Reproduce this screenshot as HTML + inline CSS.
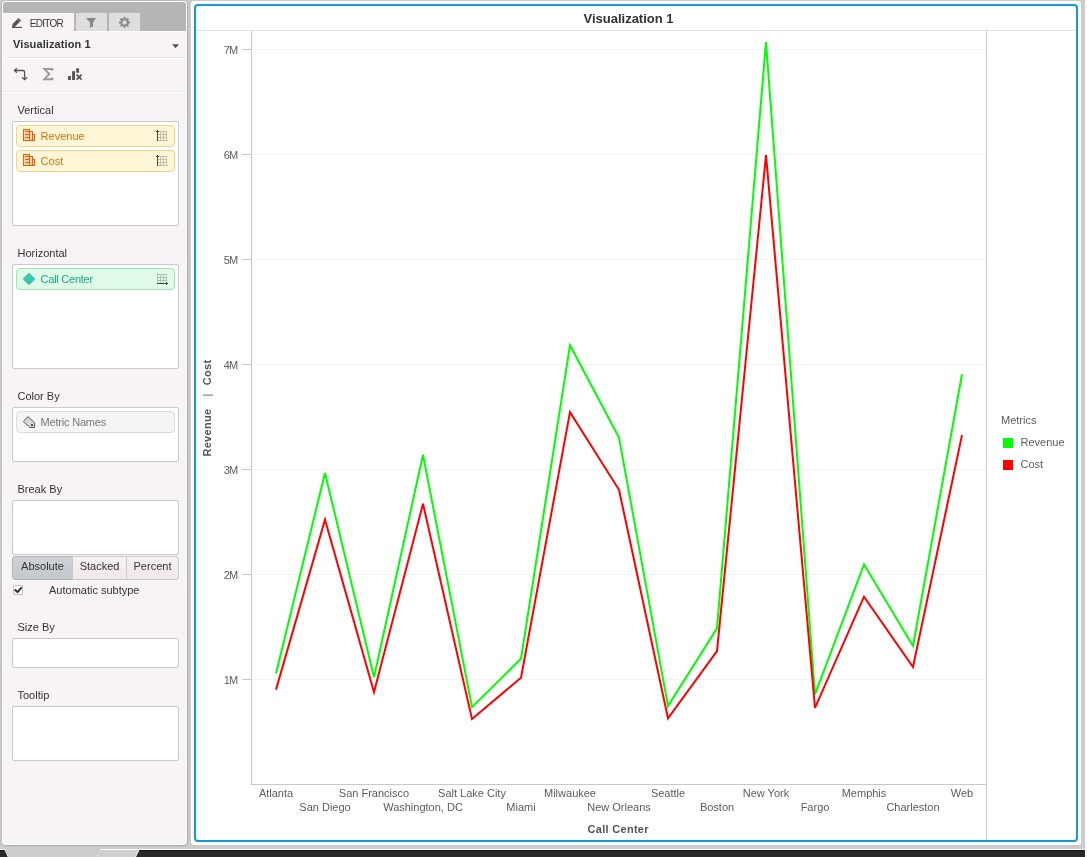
<!DOCTYPE html>
<html><head><meta charset="utf-8"><title>Visualization 1</title>
<style>
html,body{margin:0;padding:0;}
body{width:1087px;height:857px;overflow:hidden;background:#cccccc;font-family:"Liberation Sans",Arial,sans-serif;font-size:11px;color:#333;position:relative;}
.abs{position:absolute;}
#rstrip{left:1085px;top:0;width:2px;height:857px;background:#faf7fa;}
#panel{left:2px;top:1px;width:185px;height:844px;background:#f7f3f7;border-radius:4px;box-sizing:border-box;box-shadow:inset 0 0 0 1px #fff,0 0 2px rgba(0,0,0,.3),1px 1px 1px rgba(0,0,0,.1);}
#phead{left:1px;top:1px;width:183px;height:29px;background:#b5b5b5;border-radius:3px 3px 0 0;}
.tab{top:12px;height:18px;background:#dedede;}
#tab1{left:1px;width:71px;background:#f7f3f7;border-top:1px solid #fff;box-sizing:border-box;}
#tab2{left:74px;width:31px;}
#tab3{left:107px;width:31px;}
.sep{left:1px;width:183px;height:1px;background:#fff;border-top:1px solid #ece8ec;margin-top:-1px;}
.lbl{left:15.5px;white-space:nowrap;line-height:13px;}
.box{left:10px;width:167px;box-sizing:border-box;background:#fff;border:1px solid #c9c9c9;border-radius:2px;}
.pill{left:14px;width:159px;height:22px;box-sizing:border-box;border-radius:4px;line-height:20px;white-space:nowrap;}
.pill span{position:absolute;left:23.6px;top:0;}
.metric{background:#fff6d8;border:1px solid #f3d48e;color:#d9730a;}
.attr{background:#e0fae8;border:1px solid #9fe3bd;color:#16a98c;}
.gray{background:#f5f5f5;border:1px solid #dcdcdc;color:#777;}
#viz{left:191px;top:1px;width:890px;height:844px;background:#fff;border-radius:3px;}
#vizb{left:194px;top:4px;width:884px;height:838px;box-sizing:border-box;border:2px solid #169ad4;border-radius:4px;}
#title{left:196px;top:6px;width:880px;height:24px;line-height:25px;box-sizing:content-box;text-indent:-15px;text-align:center;font-weight:bold;font-size:13px;color:#333;border-bottom:1px solid #e4dfe2;}
svg.chart{position:absolute;left:0;top:0;}
svg .tick{font-size:11px;fill:#5c5c5c;font-family:"Liberation Sans",Arial,sans-serif;}
svg .axt{font-size:11px;fill:#555;font-weight:bold;letter-spacing:.3px;font-family:"Liberation Sans",Arial,sans-serif;}
#bbar{left:0;top:849px;width:1087px;height:8px;background:#222;}
.btn{top:555px;height:24px;box-sizing:border-box;line-height:19px;text-align:center;border:1px solid #c9c9c9;background:linear-gradient(#f6f1f2,#f1e8e8);color:#333;}
</style></head><body><div id="wrap" style="position:absolute;left:0;top:0;width:1087px;height:857px;will-change:transform;">
<div class="abs" id="rstrip"></div>
<div class="abs" id="panel">
 <div class="abs" id="phead"></div>
 <div class="abs tab" id="tab1"></div>
 <div class="abs tab" id="tab2"></div>
 <div class="abs tab" id="tab3"></div>
 <div class="abs" style="left:27.7px;top:16.5px;font-size:10px;line-height:12px;color:#333;letter-spacing:-.7px;text-shadow:0 1px 0 #fff;">EDITOR</div>
 <div class="abs" style="left:11px;top:37px;font-weight:bold;line-height:13px;color:#333;letter-spacing:.1px;">Visualization 1</div>
 <div class="abs" style="left:72px;top:30px;width:112px;height:1px;background:#fff;"></div>
 <div class="abs sep" style="top:57px;"></div>
 <div class="abs sep" style="top:91px;"></div>

 <div class="abs lbl" style="top:103px;">Vertical</div>
 <div class="abs box" style="top:120px;height:105px;"></div>
 <div class="abs pill metric" style="top:124px;"><span>Revenue</span></div>
 <div class="abs pill metric" style="top:149px;"><span>Cost</span></div>

 <div class="abs lbl" style="top:246px;">Horizontal</div>
 <div class="abs box" style="top:263px;height:105px;"></div>
 <div class="abs pill attr" style="top:267px;"><span style="letter-spacing:-.25px">Call Center</span></div>

 <div class="abs lbl" style="top:389px;">Color By</div>
 <div class="abs box" style="top:406px;height:55px;"></div>
 <div class="abs pill gray" style="top:410px;"><span style="letter-spacing:-.2px">Metric Names</span></div>

 <div class="abs lbl" style="top:482px;">Break By</div>
 <div class="abs box" style="top:499px;height:55px;"></div>
 <div class="abs btn" style="left:10px;width:61px;background:linear-gradient(#cdd1d6,#cbcbcf 55%,#c1c8cc);border-color:#b4b4b4;border-radius:3px 0 0 3px;">Absolute</div>
 <div class="abs btn" style="left:70px;width:55px;">Stacked</div>
 <div class="abs btn" style="left:124px;width:53px;border-radius:0 3px 3px 0;">Percent</div>
 <div class="abs" style="left:11px;top:584px;width:10px;height:10px;box-sizing:border-box;border:1px solid #c4c4c4;background:#fff;"></div>
 <div class="abs lbl" style="left:47px;top:583px;">Automatic subtype</div>

 <div class="abs lbl" style="top:620px;">Size By</div>
 <div class="abs box" style="top:637px;height:30px;"></div>
 <div class="abs lbl" style="top:688px;">Tooltip</div>
 <div class="abs box" style="top:705px;height:55px;"></div>
</div>
<svg class="chart" width="200" height="857" viewBox="0 0 200 857">
<!-- pencil -->
<polygon points="18.5,17.9 21.2,20.6 15.2,26.6 12,27.9 12.5,24.1" fill="#555"/>
<rect x="12" y="26.8" width="10" height="1.2" fill="#555"/>
<line x1="17.3" y1="19.2" x2="20" y2="21.9" stroke="#cfcfcf" stroke-width=".5"/>
<!-- funnel -->
<polygon points="85.8,18 96,18 93.1,22.2 93.1,26.2 90,28 90,22.2" fill="#888"/>
<!-- gear -->
<g stroke="#888" fill="none">
<circle cx="124.5" cy="22.4" r="3.2" stroke-width="2"/>
<g stroke-width="2">
<line x1="124.5" y1="16.9" x2="124.5" y2="18.6"/><line x1="124.5" y1="26.2" x2="124.5" y2="27.9"/>
<line x1="119" y1="22.4" x2="120.7" y2="22.4"/><line x1="128.3" y1="22.4" x2="130" y2="22.4"/>
<line x1="120.6" y1="18.5" x2="121.8" y2="19.7"/><line x1="127.2" y1="25.1" x2="128.4" y2="26.3"/>
<line x1="128.4" y1="18.5" x2="127.2" y2="19.7"/><line x1="121.8" y1="25.1" x2="120.6" y2="26.3"/>
</g></g>
<!-- dropdown -->
<polygon points="172,44.2 179,44.2 175.5,48.2" fill="#555"/>
<!-- swap -->
<g stroke="#555" stroke-width="1.3" fill="none">
<path d="M14.6,70.5 H23 Q24.6,70.5 24.6,72.2 V79.4"/>
<path d="M16.9,68.2 L14.5,70.5 L16.9,72.8"/>
<path d="M22.1,77.3 L24.6,79.7 L27.1,77.3"/>
</g>
<!-- sigma -->
<path d="M52.3,70.8 V69 H44.3 L49.3,74 L44.3,79.2 H52.3 V77.4" stroke="#999" stroke-width="1.9" fill="none"/>
<!-- bars x -->
<g fill="#555">
<rect x="68" y="76" width="2.9" height="4"/>
<rect x="72.1" y="71.2" width="2.9" height="8.8"/>
<rect x="76.2" y="68.3" width="2.9" height="4.4"/>
</g>
<path d="M76.6,74.6 L81.6,79.6 M81.6,74.6 L76.6,79.6" stroke="#555" stroke-width="1.8" fill="none"/>
<!-- metric icons -->
<g>
<rect x="23.5" y="129.5" width="6" height="11" fill="#fdd4a8" stroke="#e0640f"/>
<rect x="29.5" y="131.5" width="3" height="9" fill="#fdd4a8" stroke="#e0640f"/>
<rect x="32.5" y="134.5" width="2" height="6" fill="#fdd4a8" stroke="#e0640f"/>
<path d="M25,131.5H29M25,134.5H29M25,137.5H29" stroke="#e0640f" stroke-width="1" fill="none"/>
</g>
<g transform="translate(0,25)">
<rect x="23.5" y="129.5" width="6" height="11" fill="#fdd4a8" stroke="#e0640f"/>
<rect x="29.5" y="131.5" width="3" height="9" fill="#fdd4a8" stroke="#e0640f"/>
<rect x="32.5" y="134.5" width="2" height="6" fill="#fdd4a8" stroke="#e0640f"/>
<path d="M25,131.5H29M25,134.5H29M25,137.5H29" stroke="#e0640f" stroke-width="1" fill="none"/>
</g>
<g>
<path d="M160.5,131V141M163.5,131V141M166.5,131V141M158,131.5H167M158,134.5H167M158,137.5H167M158,140.5H168" stroke="#c9bca9" stroke-width="1" fill="none"/>
<rect x="157" y="130" width="1" height="11" fill="#45453a"/>
<rect x="156" y="131" width="3" height="1" fill="#45453a"/>
</g>
<g transform="translate(0,25)">
<path d="M160.5,131V141M163.5,131V141M166.5,131V141M158,131.5H167M158,134.5H167M158,137.5H167M158,140.5H168" stroke="#c9bca9" stroke-width="1" fill="none"/>
<rect x="157" y="130" width="1" height="11" fill="#45453a"/>
<rect x="156" y="131" width="3" height="1" fill="#45453a"/>
</g>
<!-- diamond -->
<polygon points="29,273.3 34.7,279 29,284.7 23.3,279" fill="#2ecbb0" stroke="#25b79e" stroke-width=".8"/>
<!-- grid h -->
<path d="M157.5,273V283M160.5,274V283M163.5,274V283M166.5,274V283M157,274.5H167M157,277.5H167M157,280.5H167" stroke="#a9c5b6" stroke-width="1" fill="none"/>
<rect x="157" y="283" width="11" height="1" fill="#444"/>
<rect x="166" y="282" width="1" height="3" fill="#444"/>
<!-- tag -->
<polygon points="27.9,416.5 23.4,421.6 29.9,427.5 34.6,427.5 34.6,422.8" fill="#d8d8d8" stroke="#5a5a5a" stroke-width="1" stroke-linejoin="round"/>
<rect x="31" y="424" width="2" height="2" fill="#555"/>
<!-- check -->
<path d="M14.6,589.4 L17.6,592 L21.8,587.4" stroke="#333" stroke-width="2" fill="none"/>
</svg>
<div class="abs" id="viz"></div>
<div class="abs" id="vizb"></div>
<div class="abs" id="title">Visualization 1</div>
<svg class="chart" width="1087" height="857" viewBox="0 0 1087 857">
<line x1="252" y1="49.5" x2="986" y2="49.5" stroke="#f3f3f3" stroke-width="1"/>
<line x1="242" y1="49.5" x2="252" y2="49.5" stroke="#c8c8c8" stroke-width="1"/>
<text x="237.2" y="53.7" text-anchor="end" class="tick" style="letter-spacing:-.9px">7M</text>
<line x1="252" y1="154.5" x2="986" y2="154.5" stroke="#f3f3f3" stroke-width="1"/>
<line x1="242" y1="154.5" x2="252" y2="154.5" stroke="#c8c8c8" stroke-width="1"/>
<text x="237.2" y="158.7" text-anchor="end" class="tick" style="letter-spacing:-.9px">6M</text>
<line x1="252" y1="259.5" x2="986" y2="259.5" stroke="#f3f3f3" stroke-width="1"/>
<line x1="242" y1="259.5" x2="252" y2="259.5" stroke="#c8c8c8" stroke-width="1"/>
<text x="237.2" y="263.7" text-anchor="end" class="tick" style="letter-spacing:-.9px">5M</text>
<line x1="252" y1="364.5" x2="986" y2="364.5" stroke="#f3f3f3" stroke-width="1"/>
<line x1="242" y1="364.5" x2="252" y2="364.5" stroke="#c8c8c8" stroke-width="1"/>
<text x="237.2" y="368.7" text-anchor="end" class="tick" style="letter-spacing:-.9px">4M</text>
<line x1="252" y1="469.5" x2="986" y2="469.5" stroke="#f3f3f3" stroke-width="1"/>
<line x1="242" y1="469.5" x2="252" y2="469.5" stroke="#c8c8c8" stroke-width="1"/>
<text x="237.2" y="473.7" text-anchor="end" class="tick" style="letter-spacing:-.9px">3M</text>
<line x1="252" y1="574.5" x2="986" y2="574.5" stroke="#f3f3f3" stroke-width="1"/>
<line x1="242" y1="574.5" x2="252" y2="574.5" stroke="#c8c8c8" stroke-width="1"/>
<text x="237.2" y="578.7" text-anchor="end" class="tick" style="letter-spacing:-.9px">2M</text>
<line x1="252" y1="679.5" x2="986" y2="679.5" stroke="#f3f3f3" stroke-width="1"/>
<line x1="242" y1="679.5" x2="252" y2="679.5" stroke="#c8c8c8" stroke-width="1"/>
<text x="237.2" y="683.7" text-anchor="end" class="tick" style="letter-spacing:-.9px">1M</text>
<line x1="251.5" y1="31" x2="251.5" y2="785" stroke="#c8c8c8" stroke-width="1"/>
<line x1="251" y1="784.5" x2="986" y2="784.5" stroke="#c8c8c8" stroke-width="1"/>
<line x1="986.5" y1="31" x2="986.5" y2="840" stroke="#c8c8c8" stroke-width="1"/>
<polyline fill="none" stroke="#00ff00" stroke-width="2" points="276.0,673.6 325.0,472.9 374.0,677.2 423.0,454.9 472.0,707.1 521.0,658.7 570.0,345.2 619.0,437.5 668.0,706.1 717.0,628.3 766.0,42.2 815.0,694.4 864.0,564.5 913.0,646.0 962.0,374.2"/>
<polyline fill="none" stroke="#ff0000" stroke-width="2" stroke-miterlimit="3.9" points="276.0,689.6 325.0,519.7 374.0,692.3 423.0,503.8 472.0,718.9 521.0,677.8 570.0,412.1 619.0,489.8 668.0,718.3 717.0,651.2 766.0,155.2 815.0,707.8 864.0,596.7 913.0,667.0 962.0,435.1"/>
<text x="276.0" y="797" text-anchor="middle" class="tick">Atlanta</text>
<text x="325.0" y="811" text-anchor="middle" class="tick">San Diego</text>
<text x="374.0" y="797" text-anchor="middle" class="tick">San Francisco</text>
<text x="423.0" y="811" text-anchor="middle" class="tick">Washington, DC</text>
<text x="472.0" y="797" text-anchor="middle" class="tick">Salt Lake City</text>
<text x="521.0" y="811" text-anchor="middle" class="tick">Miami</text>
<text x="570.0" y="797" text-anchor="middle" class="tick">Milwaukee</text>
<text x="619.0" y="811" text-anchor="middle" class="tick">New Orleans</text>
<text x="668.0" y="797" text-anchor="middle" class="tick">Seattle</text>
<text x="717.0" y="811" text-anchor="middle" class="tick">Boston</text>
<text x="766.0" y="797" text-anchor="middle" class="tick">New York</text>
<text x="815.0" y="811" text-anchor="middle" class="tick">Fargo</text>
<text x="864.0" y="797" text-anchor="middle" class="tick">Memphis</text>
<text x="913.0" y="811" text-anchor="middle" class="tick">Charleston</text>
<text x="962.0" y="797" text-anchor="middle" class="tick">Web</text>
<text x="618.2" y="833" text-anchor="middle" class="axt">Call Center</text>
<text transform="translate(211.2,456.6) rotate(-90)" class="axt">Revenue</text>
<text transform="translate(211.2,396.6) rotate(-90)" class="tick">|</text>
<text transform="translate(211.2,385.3) rotate(-90)" class="axt">Cost</text>
<text x="1001" y="424" class="tick">Metrics</text>
<rect x="1003" y="438" width="10" height="10" fill="#00ff00"/>
<text x="1020.5" y="446" class="tick">Revenue</text>
<rect x="1003" y="460" width="10" height="10" fill="#ff0000"/>
<text x="1020.5" y="468" class="tick">Cost</text>
</svg>
<svg class="chart" width="1087" height="857" viewBox="0 0 1087 857" style="pointer-events:none">
<rect x="0" y="850" width="1085" height="7" fill="#282828"/>
<rect x="0" y="850" width="1085" height="1" fill="#151515"/>
<rect x="0" y="849" width="5" height="1" fill="#fff"/>
<rect x="100" y="849" width="985" height="1" fill="#fff"/>
<polygon points="5,849 100,849 96.5,857 8.5,857" fill="#cccccc"/>
<polygon points="100.5,850 139,850 135.5,857 97,857" fill="#d0d0d0"/>
<path d="M4.8,849.5 L8.3,857 M100.3,849.5 L96.8,857 M139,849.8 L135.5,857" stroke="#fff" stroke-width="1" fill="none"/>
<text x="33" y="864.6" style="font-family:'Liberation Sans',Arial,sans-serif;font-size:11px;font-weight:bold;fill:#333">Sheet 1</text>
</svg>
</div></body></html>
